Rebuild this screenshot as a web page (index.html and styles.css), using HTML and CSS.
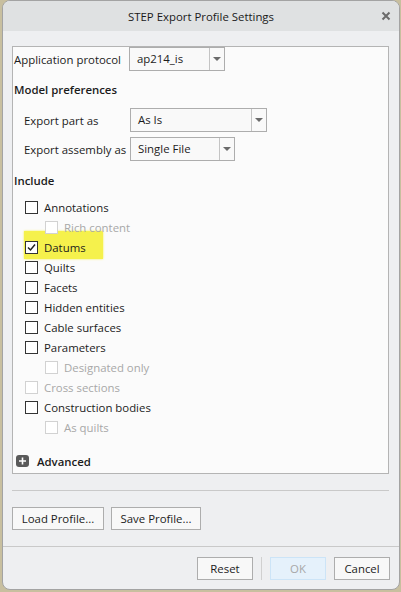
FILE: index.html
```html
<!DOCTYPE html>
<html lang="en">
<head>
    <meta charset="UTF-8">
    <meta name="viewport" content="width=device-width, initial-scale=1.0">
    <title>STEP Export Profile Settings</title>
    <link rel="stylesheet" href="styles.css">
</head>
<body>
    <div class="window">
        <div class="titlebar">
            <span></span>
            <div class="title">STEP Export Profile Settings</div>
            <div class="close">
                <svg width="10" height="10" viewBox="0 0 10 10"><path d="M1.5 1.5 L8.5 8.5 M8.5 1.5 L1.5 8.5" stroke="#6b6b6b" stroke-width="2"/></svg>
            </div>
        </div>

        <div class="content">
            <div class="panel">
                <!-- Protocolo -->
                <div class="row">
                    <div class="label">Application protocol</div>
                    <div class="select w-proto">
                        <span class="value">ap214_is</span>
                        <span class="arrow"></span>
                    </div>
                </div>

                <div class="heading">Model preferences</div>
                <div class="row sub">
                    <div class="label">Export part as</div>
                    <div class="select w-part">
                        <span class="value">As Is</span>
                        <span class="arrow"></span>
                    </div>
                </div>
                <div class="row sub second">
                    <div class="label">Export assembly as</div>
                    <div class="select w-asm">
                        <span class="value">Single File</span>
                        <span class="arrow"></span>
                    </div>
                </div>

                <div class="heading include">Include</div>
                <div class="checks">
                    <div class="check"><span class="box"></span>Annotations</div>
                    <div class="check child disabled"><span class="box"></span>Rich content</div>
                    <div class="check marked"><span class="box on"><svg width="11" height="11" viewBox="0 0 11 11"><path d="M2 5.5 L4.5 8 L9 2.5" fill="none" stroke="#222" stroke-width="1.5"/></svg></span>Datums</div>
                    <div class="check"><span class="box"></span>Quilts</div>
                    <div class="check"><span class="box"></span>Facets</div>
                    <div class="check"><span class="box"></span>Hidden entities</div>
                    <div class="check"><span class="box"></span>Cable surfaces</div>
                    <div class="check"><span class="box"></span>Parameters</div>
                    <div class="check child disabled"><span class="box"></span>Designated only</div>
                    <div class="check disabled"><span class="box"></span>Cross sections</div>
                    <div class="check"><span class="box"></span>Construction bodies</div>
                    <div class="check child disabled"><span class="box"></span>As quilts</div>
                </div>

                <div class="advanced">
                    <span class="plus">
                        <svg width="13" height="12" viewBox="0 0 13 12"><rect x="0" y="0" width="13" height="12" rx="3" fill="#5a5a5a"/><path d="M6.5 2.5 V9.5 M3 6 H10" stroke="#fff" stroke-width="1.6"/></svg>
                    </span>
                    Advanced
                </div>
            </div>

            <div class="separator"></div>

            <div class="profile-buttons">
                <button class="btn w-load">Load Profile...</button>
                <button class="btn w-save">Save Profile...</button>
            </div>
        </div>

        <div class="footer">
            <button class="btn w-foot">Reset</button>
            <span class="divider"></span>
            <button class="btn w-foot ok" disabled>OK</button>
            <button class="btn w-foot">Cancel</button>
        </div>
    </div>
</body>
</html>
```

FILE: styles.css
```css
body {
    margin: 0;
    background-color: #c8bf9f;
    font-family: "Open Sans", "Noto Sans", sans-serif;
    font-size: 11.4px;
    color: #1c1c1c;
}
.window {
    margin-left: 2px;
    width: 398px;
    height: 590px;
    box-sizing: border-box;
    border: 1px solid #a3a3a3;
    border-radius: 8px;
    background-color: #eeeff1;
    overflow: hidden;
    display: flex;
    flex-direction: column;
}
.titlebar {
    display: grid;
    grid-template-columns: 26px 1fr 26px;
    align-items: center;
    height: 30px;
    background-color: #dfe1e2;
}
.title {
    text-align: center;
    font-size: 11.4px;
    color: #1a1a1a;
}
.close {
    display: flex;
    justify-content: center;
    align-items: center;
}
.content {
    padding: 15px 10px 0 9px;
}
.panel {
    height: 428px;
    box-sizing: border-box;
    border: 1px solid #b4b4b4;
    background-color: #fbfbfb;
    padding-left: 1px;
    display: flex;
    flex-direction: column;
}
.row {
    display: flex;
    align-items: center;
    height: 24px;
    white-space: nowrap;
}
.row .label {
    width: 115px;
}
.row.sub {
    margin-top: 7px;
    padding-left: 10px;
}
.row.sub .label {
    width: 106px;
}
.row.sub.second {
    margin-top: 5px;
}
.select {
    display: flex;
    height: 24px;
    box-sizing: border-box;
    border: 1px solid #adadad;
    background-color: #f9f9f9;
}
.select .value {
    flex: 1;
    padding-left: 7px;
    line-height: 22px;
}
.select .arrow {
    width: 14px;
    border-left: 1px solid #c4c4c4;
    display: flex;
    justify-content: center;
    align-items: center;
}
.select .arrow::after {
    content: "";
    border-left: 4px solid transparent;
    border-right: 4px solid transparent;
    border-top: 4px solid #6a6a6a;
}
.w-proto { width: 96px; }
.w-part { width: 137px; }
.w-asm { width: 105px; }
.heading {
    margin-top: 8px;
    height: 22px;
    line-height: 22px;
    font-weight: 600;
}
.heading.include {
    margin-top: 9px;
}
.checks {
    margin-top: 5px;
    display: flex;
    flex-direction: column;
}
.check {
    position: relative;
    z-index: 1;
    display: flex;
    align-items: center;
    height: 20px;
    padding-left: 11px;
    white-space: nowrap;
}
.check.child {
    padding-left: 31px;
}
.check.disabled {
    color: #a8a8a8;
}
.box {
    width: 13px;
    height: 13px;
    box-sizing: border-box;
    border: 1px solid #333;
    background-color: #fff;
    margin-right: 6px;
    display: flex;
    justify-content: center;
    align-items: center;
}
.check.disabled .box {
    border-color: #d2d2d2;
}
/* resaltado amarillo detras de Datums */
.check.marked {
    z-index: 0;
}
.check.marked::before {
    content: "";
    position: absolute;
    z-index: -1;
    left: 10px;
    top: -6px;
    width: 79px;
    height: 28px;
    background-color: #f5f14c;
    box-shadow: 0 0 2px #f5f14c;
}
.advanced {
    margin-top: 14px;
    display: flex;
    align-items: center;
    height: 20px;
    padding-left: 2px;
    font-weight: 600;
}
.plus {
    display: flex;
    margin-right: 8px;
}
.separator {
    margin-top: 16px;
    height: 1px;
    background-color: #c9c9c9;
}
.profile-buttons {
    margin-top: 16px;
    display: flex;
    gap: 7px;
}
.btn {
    height: 23px;
    box-sizing: border-box;
    border: 1px solid #adadad;
    background-color: #f8f8f8;
    font-family: inherit;
    font-size: 11.4px;
    color: #1c1c1c;
    padding: 0;
}
.w-load { width: 92px; }
.w-save { width: 90px; }
.footer {
    margin-top: 16px;
    border-top: 1px solid #c9c9c9;
    padding: 10px 9px 0 0;
    display: flex;
    justify-content: flex-end;
    gap: 8px;
}
.w-foot { width: 56px; }
.divider {
    width: 1px;
    height: 23px;
    background-color: #d0d0d0;
}
.btn.ok {
    background-color: #e5f1fb;
    border-color: #cce4f7;
    color: #a8a8a8;
}
```
